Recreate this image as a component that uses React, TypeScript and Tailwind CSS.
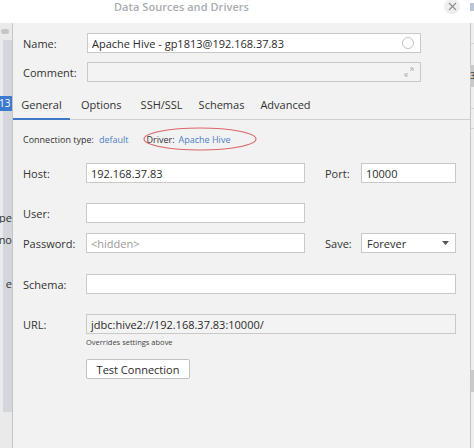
import React from "react";

const font = { fontFamily: '"Open Sans", "Noto Sans", sans-serif' };

function Input({
  w,
  value,
  placeholder,
  readOnly,
  children,
}: {
  w: string;
  value?: string;
  placeholder?: string;
  readOnly?: boolean;
  children?: React.ReactNode;
}) {
  return (
    <div
      className={`${w} h-[20px] border border-[#c9c9c9] ${
        readOnly ? "bg-[#f3f3f3]" : "bg-white"
      } flex items-center pl-[4px] pr-[6px] relative shrink-0`}
    >
      {value && <span className="text-[11px] text-[#2b2b2b] leading-none">{value}</span>}
      {placeholder && <span className="text-[11px] text-[#9a9a9a] leading-none">{placeholder}</span>}
      {children}
    </div>
  );
}

function Label({ children, w = "w-[64px]" }: { children: React.ReactNode; w?: string }) {
  return <div className={`${w} shrink-0 text-[11px] text-[#333333] leading-none`}>{children}</div>;
}

export default function App() {
  return (
    <div style={font} className="w-[474px] h-[448px] bg-white flex flex-col overflow-hidden relative">
      {/* Title bar */}
      <div className="h-[23px] shrink-0 relative flex items-start">
        <div className="absolute left-[114px] top-0 text-[11px] font-semibold text-[#a9acb1] leading-[13px] tracking-[0.05px]">
          Data Sources and Drivers
        </div>
        <div className="absolute left-[444px] top-[-1px] w-[16px] h-[15px] rounded-full bg-[#efefef] flex items-center justify-center">
          <svg width="9" height="9" viewBox="0 0 9 9">
            <path d="M1 1 L8 8 M8 1 L1 8" stroke="#8d8d8d" strokeWidth="1.1" />
          </svg>
        </div>
        <div className="absolute left-[470px] top-[3px] w-[4px] h-[8px] bg-[#b9c4d6]" />
      </div>

      <div className="flex-1 flex min-h-0">
        {/* Left strip */}
        <div className="w-[12px] shrink-0 flex flex-col bg-[#e9eaec] relative overflow-hidden">
          <div className="h-[17px] flex items-center">
            <div className="ml-[1px] w-[8px] h-[5px] rounded-full bg-[#c4c6ca]" />
          </div>
          <div className="ml-[3px] flex-1 bg-[#d3d6da] flex flex-col mb-[36px]">
            <div className="mt-[56px] h-[15px] bg-[#3b7ad0] text-white text-[10px] leading-[15px] -ml-[3px] overflow-hidden whitespace-nowrap">
              <span className="ml-[-1px]">13</span>
            </div>
          </div>
          <div className="absolute left-0 top-[189px] w-[12px] overflow-hidden text-[11px] text-[#333] leading-none whitespace-nowrap flex justify-end">
            <span>pe</span>
          </div>
          <div className="absolute left-0 top-[211px] w-[12px] overflow-hidden text-[11px] text-[#333] leading-none whitespace-nowrap flex justify-end">
            <span>no</span>
          </div>
          <div className="absolute left-0 top-[255px] w-[12px] overflow-hidden text-[11px] text-[#333] leading-none whitespace-nowrap flex justify-end">
            <span>e</span>
          </div>
        </div>

        {/* Main panel */}
        <div className="w-[458px] shrink-0 border-l border-[#c5c5c5] bg-[#f2f2f2] flex flex-col relative">
          {/* Name */}
          <div className="flex items-center pl-[10px] mt-[10px]">
            <Label>Name:</Label>
            <Input w="w-[334px]" value="Apache Hive - gp1813@192.168.37.83">
              <div className="absolute right-[6px] top-[3px] w-[12px] h-[12px] rounded-full border border-[#c2c2c2] bg-white" />
            </Input>
          </div>
          {/* Comment */}
          <div className="flex items-center pl-[10px] mt-[9px]">
            <Label>Comment:</Label>
            <Input w="w-[334px]" readOnly>
              <svg className="absolute right-[6px] top-[4px]" width="10" height="10" viewBox="0 0 10 10">
                <path d="M6 1 H9 V4 M9 1 L6 4 M1 6 V9 H4 M1 9 L4 6" stroke="#b5b5b5" strokeWidth="1" fill="none" />
              </svg>
            </Input>
          </div>
          {/* Tabs */}
          <div className="mt-[16px] flex items-end border-b border-[#cfcfcf] h-[22px] relative">
            <div className="w-[57px] h-[22px] relative flex justify-center">
              <span className="text-[11px] text-[#333] leading-none pt-[2px]">General</span>
              <div className="absolute left-0 right-0 bottom-[-1px] h-[2px] bg-[#3d79c4]" />
            </div>
            <div className="ml-[11px] h-[22px] text-[11px] text-[#333] leading-none pt-[2px]">Options</div>
            <div className="ml-[19px] h-[22px] text-[11px] text-[#333] leading-none pt-[2px]">SSH/SSL</div>
            <div className="ml-[16px] h-[22px] text-[11px] text-[#333] leading-none pt-[2px]">Schemas</div>
            <div className="ml-[16px] h-[22px] text-[11px] text-[#333] leading-none pt-[2px]">Advanced</div>
          </div>
          {/* Connection type */}
          <div className="mt-[13px] flex items-center pl-[10px] h-[12px] relative">
            <span className="text-[9px] text-[#333] leading-none">Connection type:</span>
            <span className="ml-[5px] text-[9px] text-[#4b7fc2] leading-none">default</span>
            <span className="ml-[18px] text-[9px] text-[#333] leading-none">Driver:</span>
            <span className="ml-[4px] text-[9px] text-[#4b7fc2] leading-none">Apache Hive</span>
            <svg className="absolute left-[129px] top-[-11px]" width="118" height="34" viewBox="0 0 118 34">
              <ellipse cx="58" cy="17" rx="56" ry="11" fill="none" stroke="#d9666b" strokeWidth="1.1" />
            </svg>
          </div>
          {/* Host */}
          <div className="mt-[18px] flex items-center pl-[10px]">
            <Label w="w-[63px]">Host:</Label>
            <Input w="w-[219px]" value="192.168.37.83" />
            <Label w="w-[36px] ml-[20px]">Port:</Label>
            <Input w="w-[95px]" value="10000" />
          </div>
          {/* User */}
          <div className="mt-[20px] flex items-center pl-[10px]">
            <Label w="w-[63px]">User:</Label>
            <Input w="w-[219px]" />
          </div>
          {/* Password */}
          <div className="mt-[10px] flex items-center pl-[10px]">
            <Label w="w-[63px]">Password:</Label>
            <Input w="w-[219px]" placeholder="<hidden>" />
            <Label w="w-[36px] ml-[20px]">Save:</Label>
            <div className="w-[95px] h-[20px] border border-[#c9c9c9] bg-white flex items-center pl-[5px] pr-[6px] justify-between">
              <span className="text-[11px] text-[#2b2b2b] leading-none">Forever</span>
              <svg width="7" height="4" viewBox="0 0 7 4">
                <path d="M0 0 H7 L3.5 4 Z" fill="#555" />
              </svg>
            </div>
          </div>
          {/* Schema */}
          <div className="mt-[21px] flex items-center pl-[10px]">
            <Label w="w-[63px]">Schema:</Label>
            <Input w="w-[370px]" />
          </div>
          {/* URL */}
          <div className="mt-[20px] flex items-center pl-[10px]">
            <Label w="w-[63px]">URL:</Label>
            <Input w="w-[370px]" readOnly value="jdbc:hive2://192.168.37.83:10000/" />
          </div>
          <div className="pl-[73px] mt-[3px] text-[7.5px] text-[#444] leading-[10px]">Overrides settings above</div>
          {/* Button */}
          <div className="pl-[73px] mt-[12px]">
            <div className="w-[104px] h-[20px] border border-[#c2c2c2] rounded-[2px] bg-white flex items-center justify-center text-[11px] text-[#2b2b2b] leading-none">
              Test Connection
            </div>
          </div>
        </div>

        {/* Right strip */}
        <div className="flex-1 border-l border-[#c5c5c5] bg-[#efefef] flex flex-col">
          <div className="mt-[20px] h-[1px] bg-[#d4d4d4]" />
          <div className="mt-[21px] h-[22px] bg-[#cacaca] text-[9px] text-[#333] leading-[22px] -ml-[1px] overflow-hidden">3</div>
          <div className="mt-[21px] h-[1px] bg-[#d4d4d4]" />
          <div className="mt-[19px] h-[1px] bg-[#d4d4d4]" />
          <div className="mt-[241px] h-[22px] bg-[#cacaca]" />
        </div>
      </div>
    </div>
  );
}
